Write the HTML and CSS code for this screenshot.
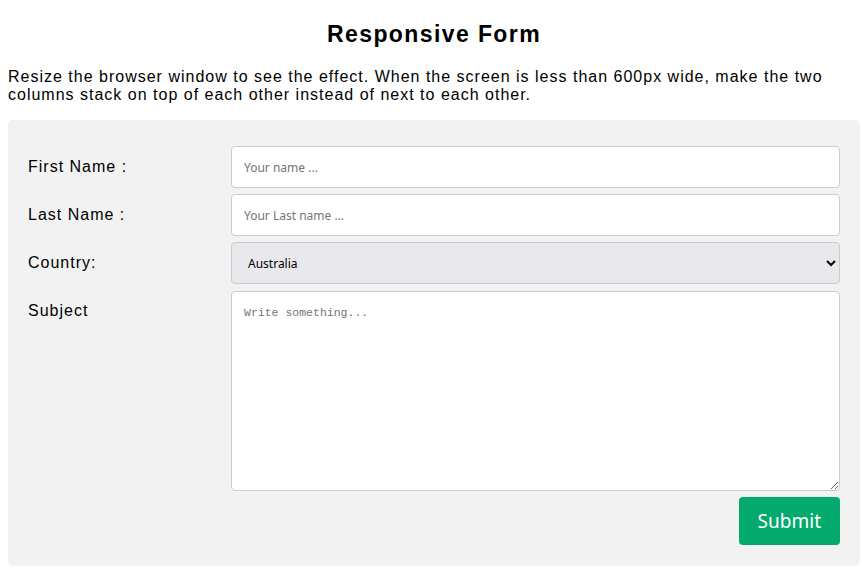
FILE: index.html
```html
<!DOCTYPE html>
<html lang="en">
<head>
    <meta charset="UTF-8">
    <meta name="viewport" content="width=device-width, initial-scale=1.0">
    <title>Responsive Form</title>
    <link rel="stylesheet" href="styles.css">
</head>
<body>
    <h2 class="page-title">Responsive Form</h2>
    <p class="intro">Resize the browser window to see the effect. When the screen is less than 600px wide, make the two columns stack on top of each other instead of next to each other.</p>

    <div class="form-container">
        <form>
            <div class="row">
                <div class="col-25">
                    <label for="fname">First Name :</label>
                </div>
                <div class="col-75">
                    <input type="text" id="fname" name="firstname" class="field" placeholder="Your name ...">
                </div>
            </div>
            <div class="row">
                <div class="col-25">
                    <label for="lname">Last Name :</label>
                </div>
                <div class="col-75">
                    <input type="text" id="lname" name="lastname" class="field" placeholder="Your Last name ...">
                </div>
            </div>
            <div class="row">
                <div class="col-25">
                    <label for="country">Country:</label>
                </div>
                <div class="col-75">
                    <select id="country" name="country" class="field field-select">
                        <option value="australia">Australia</option>
                        <option value="canada">Canada</option>
                        <option value="usa">USA</option>
                    </select>
                </div>
            </div>
            <div class="row row-area">
                <div class="col-25">
                    <label for="subject">Subject</label>
                </div>
                <div class="col-75">
                    <textarea id="subject" name="subject" class="field field-area" placeholder="Write something..."></textarea>
                </div>
            </div>
            <div class="row row-submit">
                <input type="submit" value="Submit" class="btn-submit">
            </div>
        </form>
    </div>
</body>
</html>
```

FILE: styles.css
```css
* {
    box-sizing: border-box;
}

body {
    font-family: "Liberation Sans", Arial, sans-serif;
    margin: 0;
    padding: 8px 2px 8px 8px;
    color: #000;
}

.page-title {
    text-align: center;
    font-size: 23px;
    letter-spacing: 1.4px;
    margin: 13px 0 20px;
}

.intro {
    font-size: 16px;
    letter-spacing: 1px;
    margin: 0 0 16px;
}

.form-container {
    background: #f2f2f2;
    border-radius: 5px;
    padding: 20px 20px 21px;
}

.row {
    display: flex;
}

.col-25 {
    width: 25%;
    margin-top: 6px;
}

.col-75 {
    width: 75%;
    margin-top: 6px;
}

.row-area .col-75 {
    margin-top: 7px;
}

label {
    display: inline-block;
    padding: 12px 12px 12px 0;
    font-size: 16px;
    letter-spacing: 1px;
}

.field {
    display: block;
    width: 100%;
    height: 42px;
    padding: 0 12px;
    border: 1px solid #ccc;
    border-radius: 4px;
    font-family: "Noto Sans", sans-serif;
    font-size: 12px;
    background: #fff;
    color: #000;
}

.field::placeholder {
    color: #757575;
}

.field-select {
    background: #e9e9ed;
    padding: 0 8px 0 12px;
}

.field-area {
    height: 200px;
    padding: 14px 12px 12px;
    resize: vertical;
    font-family: "Liberation Mono", monospace;
    font-size: 11.5px;
}

.row-submit {
    justify-content: flex-end;
}

.btn-submit {
    height: 48px;
    background: #04aa6d;
    color: #fff;
    border: none;
    border-radius: 4px;
    padding: 0 19px;
    margin-top: 6px;
    font-family: "Noto Sans", sans-serif;
    font-size: 19px;
    cursor: pointer;
}

.btn-submit:hover {
    background: #45a049;
}
```
